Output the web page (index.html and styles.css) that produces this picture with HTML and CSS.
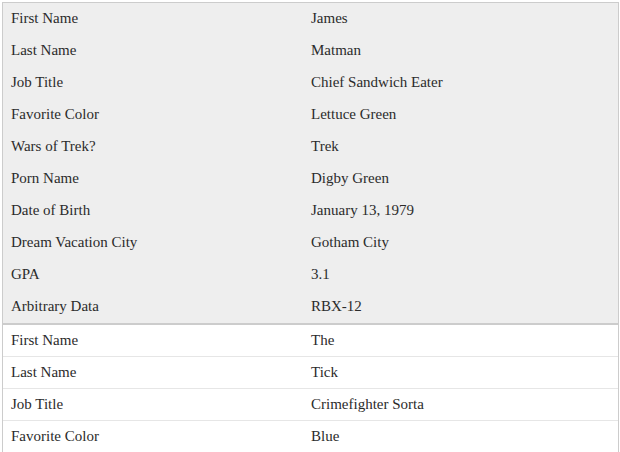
FILE: index.html
```html
<!DOCTYPE html>
<html>
<head>
<meta charset="utf-8">
<link rel="stylesheet" href="styles.css">
</head>
<body>
<table class="data">
  <colgroup><col class="c1"><col class="c2"></colgroup>
  <tbody class="group current">
    <tr><td>First Name</td><td>James</td></tr>
    <tr><td>Last Name</td><td>Matman</td></tr>
    <tr><td>Job Title</td><td>Chief Sandwich Eater</td></tr>
    <tr><td>Favorite Color</td><td>Lettuce Green</td></tr>
    <tr><td>Wars of Trek?</td><td>Trek</td></tr>
    <tr><td>Porn Name</td><td>Digby Green</td></tr>
    <tr><td>Date of Birth</td><td>January 13, 1979</td></tr>
    <tr><td>Dream Vacation City</td><td>Gotham City</td></tr>
    <tr><td>GPA</td><td>3.1</td></tr>
    <tr><td>Arbitrary Data</td><td>RBX-12</td></tr>
  </tbody>
  <tbody class="group next">
    <tr><td>First Name</td><td>The</td></tr>
    <tr><td>Last Name</td><td>Tick</td></tr>
    <tr><td>Job Title</td><td>Crimefighter Sorta</td></tr>
    <tr><td>Favorite Color</td><td>Blue</td></tr>
  </tbody>
</table>
</body>
</html>
```
FILE: styles.css
```css
html, body {
  margin: 0;
  padding: 0;
  background: #fff;
}
body {
  padding: 2px;
  font-family: "Liberation Serif", "DejaVu Serif", serif;
  font-size: 15px;
  color: #2b2b2b;
}
.data {
  border-collapse: separate;
  border-spacing: 0;
  width: 617px;
  border: 1px solid #cccccc;
  table-layout: fixed;
}
.c1 { width: 300px; }
.data td {
  padding: 0 8px;
  height: 32px;
  box-sizing: border-box;
  vertical-align: middle;
  white-space: nowrap;
}
.current td {
  background: #eeeeee;
  padding-bottom: 2px;
}
.next td {
  background: #fff;
  border-bottom: 1px solid #e6e6e6;
}
.next tr:first-child td {
  border-top: 2px solid #cccccc;
  height: 34px;
}
.next tr:last-child td {
  border-bottom: 0;
  padding-bottom: 2px;
}
```
